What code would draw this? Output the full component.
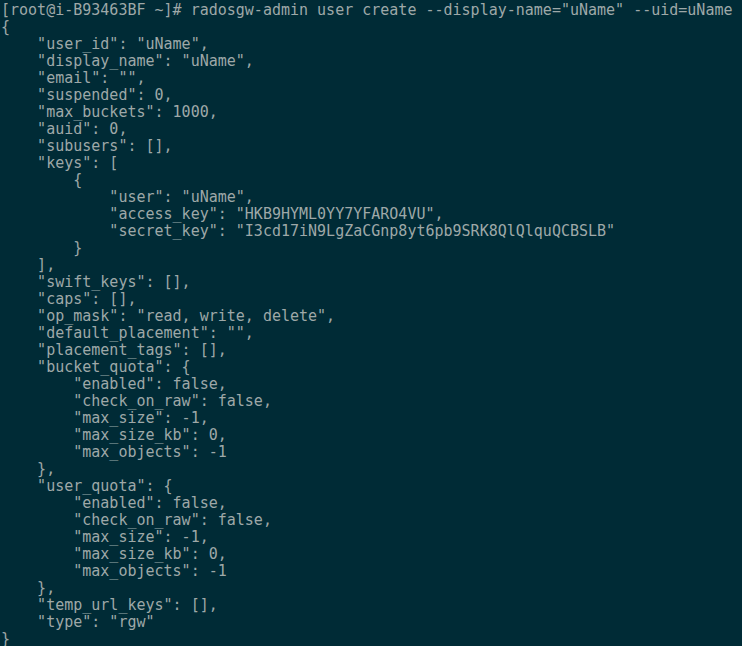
const lines = [
  '[root@i-B93463BF ~]# radosgw-admin user create --display-name="uName" --uid=uName',
  '{',
  '    "user_id": "uName",',
  '    "display_name": "uName",',
  '    "email": "",',
  '    "suspended": 0,',
  '    "max_buckets": 1000,',
  '    "auid": 0,',
  '    "subusers": [],',
  '    "keys": [',
  '        {',
  '            "user": "uName",',
  '            "access_key": "HKB9HYML0YY7YFARO4VU",',
  '            "secret_key": "I3cd17iN9LgZaCGnp8yt6pb9SRK8QlQlquQCBSLB"',
  '        }',
  '    ],',
  '    "swift_keys": [],',
  '    "caps": [],',
  '    "op_mask": "read, write, delete",',
  '    "default_placement": "",',
  '    "placement_tags": [],',
  '    "bucket_quota": {',
  '        "enabled": false,',
  '        "check_on_raw": false,',
  '        "max_size": -1,',
  '        "max_size_kb": 0,',
  '        "max_objects": -1',
  '    },',
  '    "user_quota": {',
  '        "enabled": false,',
  '        "check_on_raw": false,',
  '        "max_size": -1,',
  '        "max_size_kb": 0,',
  '        "max_objects": -1',
  '    },',
  '    "temp_url_keys": [],',
  '    "type": "rgw"',
  '}',
];

export default function App() {
  return (
    <div className="w-[742px] h-[646px] overflow-hidden bg-[#002b36] pt-[2px] pl-[1px]">
      <pre className="font-['DejaVu_Sans_Mono',monospace] text-[15px] leading-[17px] text-[#9ea8a8] whitespace-pre">
        {lines.join('\n')}
      </pre>
    </div>
  );
}
